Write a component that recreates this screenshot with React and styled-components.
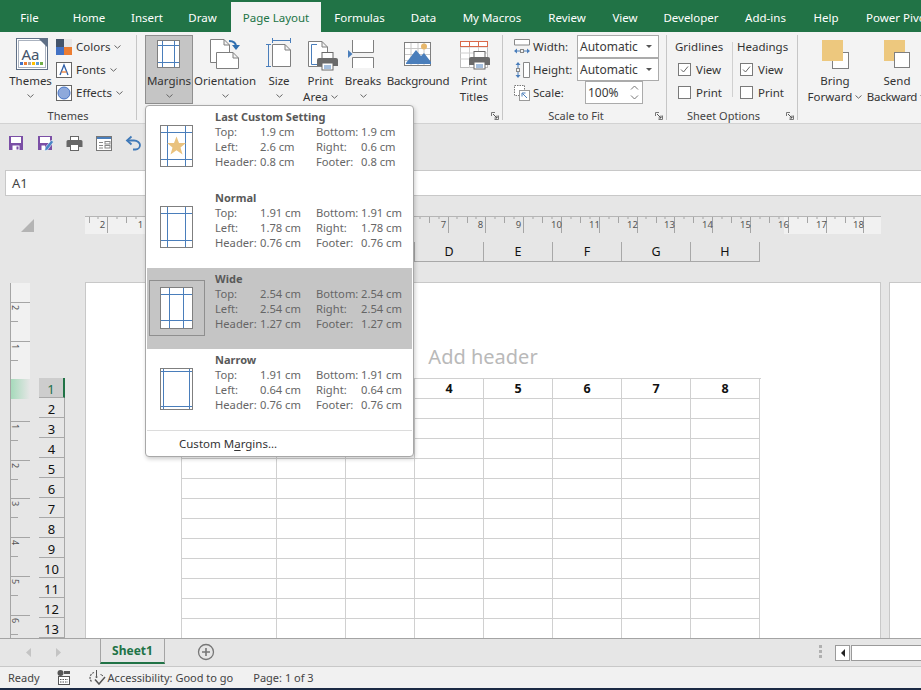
import React from "react";
import styled, { createGlobalStyle } from "styled-components";

const UI_FONT = '"Noto Sans", "Open Sans", "Liberation Sans", sans-serif';

const Global = createGlobalStyle`
  html, body { margin: 0; padding: 0; background: #e6e6e6; }
  * { box-sizing: border-box; }
`;

const Window = styled.div`
  position: relative;
  width: 921px;
  height: 690px;
  overflow: hidden;
  display: flex;
  flex-direction: column;
  background: #e6e6e6;
  font-family: ${UI_FONT};
  font-size: 11.5px;
  color: #333;
`;

/* ---------- tabs ---------- */
const TabBar = styled.div`
  height: 32px;
  flex: none;
  display: flex;
  background: #217346;
`;
const Tab = styled.div`
  flex: none;
  width: ${(p) => p.$width}px;
  margin-top: ${(p) => (p.$active ? 2 : 0)}px;
  margin-left: ${(p) => (p.$active ? 1 : 0)}px;
  padding-top: ${(p) => (p.$active ? 0 : 2)}px;
  display: flex;
  align-items: center;
  justify-content: center;
  white-space: nowrap;
  font-size: 11.5px;
  background: ${(p) => (p.$active ? "#f3f3f3" : "transparent")};
  color: ${(p) => (p.$active ? "#217346" : "#fff")};
`;

/* ---------- ribbon ---------- */
const Ribbon = styled.div`
  height: 92px;
  flex: none;
  display: flex;
  padding-top: 3px;
  background: #f3f3f3;
  border-bottom: 1px solid #d2d2d2;
`;
const Group = styled.div`
  flex: none;
  width: ${(p) => p.$width}px;
  height: 85px;
  margin-left: ${(p) => p.$left || 0}px;
  display: flex;
  flex-direction: column;
  border-right: ${(p) => (p.$plain ? "none" : "1px solid #c6c6c6")};
`;
const GroupBody = styled.div`
  height: 72px;
  flex: none;
  display: flex;
  padding-left: ${(p) => p.$pad || 0}px;
`;
const GroupFooter = styled.div`
  height: 13px;
  display: flex;
  line-height: 18px;
  color: #444;
  font-size: 11px;
`;
const GroupLabel = styled.div`
  flex: 1;
  text-align: center;
  white-space: nowrap;
`;
const Launcher = styled.svg`
  flex: none;
  width: 8px;
  height: 8px;
  margin: 5px 3px 0 6px;
`;
const BigButton = styled.div`
  flex: none;
  width: ${(p) => p.$width}px;
  height: 69px;
  display: flex;
  flex-direction: column;
  align-items: center;
  border: 1px solid ${(p) => (p.$active ? "#8f8f8f" : "transparent")};
  background: ${(p) => (p.$active ? "#c5c5c5" : "transparent")};
  line-height: 16px;
  color: #333;
  white-space: nowrap;
`;
const BigSvg = styled.svg`
  flex: none;
  width: 40px;
  height: 37px;
`;
const ButtonLine = styled.div`
  height: 16px;
  display: flex;
  align-items: center;
  gap: 3px;
  letter-spacing: ${(p) => (p.$tight ? "-0.3px" : "normal")};
`;
const Chevron = styled.svg`
  width: 7px;
  height: 4px;
  flex: none;
`;
const SmallColumn = styled.div`
  display: flex;
  flex-direction: column;
  margin-left: 5px;
`;
const SmallRow = styled.div`
  height: 23px;
  display: flex;
  align-items: center;
  gap: 4px;
  white-space: nowrap;
`;
const SmallIcon = styled.svg`
  flex: none;
  width: 16px;
  height: 16px;
`;
const ScaleColumn = styled.div`
  display: flex;
  flex-direction: column;
`;
const ScaleRow = styled.div`
  height: 23px;
  display: flex;
  align-items: center;
  gap: 3px;
`;
const ScaleLabel = styled.div`
  width: ${(p) => p.$width}px;
  flex: none;
`;
const Select = styled.div`
  width: 82px;
  height: 23px;
  flex: none;
  display: flex;
  align-items: center;
  justify-content: space-between;
  padding: 0 6px 0 2px;
  background: #fff;
  border: 1px solid #ababab;
  font-size: 12px;
  color: #3a3a3a;
`;
const Caret = styled.div`
  width: 0;
  height: 0;
  border-left: 3.5px solid transparent;
  border-right: 3.5px solid transparent;
  border-top: 3.5px solid #555;
`;
const Spinner = styled(Select)`
  width: 58px;
  padding-right: 3px;
`;
const SpinArrows = styled.svg`
  width: 9px;
  height: 17px;
  flex: none;
`;
const OptionColumn = styled.div`
  width: ${(p) => p.$width}px;
  flex: none;
  display: flex;
  flex-direction: column;
`;
const OptionTitle = styled.div`
  height: 23px;
  display: flex;
  align-items: center;
`;
const OptionRow = styled.label`
  height: 23px;
  display: flex;
  align-items: center;
  gap: 5px;
  padding-left: 3px;
`;
const CheckBox = styled.span`
  width: 13px;
  height: 13px;
  flex: none;
  display: flex;
  background: #fff;
  border: 1px solid #7a7a7a;
`;
const OptionDivider = styled.div`
  width: 1px;
  height: 55px;
  flex: none;
  margin: 7px 4px 0 0;
  background: #d0d0d0;
`;

/* ---------- quick access and formula bar ---------- */
const QuickAccess = styled.div`
  height: 46px;
  flex: none;
  display: flex;
  align-items: center;
  gap: 12px;
  padding: 0 0 8px 8px;
`;
const QuickIcon = styled.svg`
  width: 17px;
  height: 17px;
  flex: none;
`;
const FormulaBar = styled.div`
  height: 26px;
  flex: none;
  margin-left: 5px;
  display: flex;
  align-items: center;
  padding-left: 6px;
  background: #fff;
  border: 1px solid #c8c8c8;
  border-right: none;
  font-size: 13px;
  color: #444;
`;

/* ---------- workspace ---------- */
const Workspace = styled.div`
  flex: 1;
  min-height: 0;
  display: flex;
  overflow: hidden;
`;
const Gutter = styled.div`
  width: 85px;
  flex: none;
  display: flex;
  flex-direction: column;
`;
const Corner = styled.div`
  width: 13px;
  height: 13px;
  flex: none;
  margin: 23px 0 51px 21px;
  background: #b4b4b4;
  clip-path: polygon(100% 0, 100% 100%, 0 100%);
`;
const GutterRows = styled.div`
  flex: 1;
  display: flex;
`;
const VRuler = styled.svg`
  width: 21px;
  height: 355px;
  flex: none;
  margin-left: 10px;
`;
const RowHeaders = styled.div`
  width: 26px;
  flex: none;
  margin-left: 8px;
  padding-top: 95px;
  display: flex;
  flex-direction: column;
`;
const RowHeader = styled.div`
  height: 20px;
  flex: none;
  display: flex;
  align-items: center;
  justify-content: center;
  padding-top: 2px;
  font-size: 13px;
  color: ${(p) => (p.$active ? "#1f6f4a" : "#111")};
  background: ${(p) => (p.$active ? "#cdcdcd" : "transparent")};
  border-bottom: 1px solid #a8a8a8;
  border-right: ${(p) => (p.$active ? "2px solid #217346" : "1px solid #a8a8a8")};
`;
const MainColumn = styled.div`
  flex: 1;
  min-width: 0;
  display: flex;
  flex-direction: column;
`;
const HRuler = styled.svg`
  width: 796px;
  height: 18px;
  flex: none;
  margin-top: 20px;
`;
const ColumnHeaders = styled.div`
  display: flex;
  flex: none;
  height: 20px;
  margin: 8px 0 20px 97px;
`;
const ColumnHeader = styled.div`
  width: ${(p) => p.$width}px;
  flex: none;
  display: flex;
  align-items: center;
  justify-content: center;
  font-size: 12.5px;
  color: #111;
  border-right: 1px solid #a8a8a8;
  border-bottom: 1px solid #a8a8a8;
`;
const PageRow = styled.div`
  flex: 1;
  min-height: 0;
  display: flex;
  gap: 8px;
`;
const Page = styled.div`
  width: 796px;
  flex: none;
  background: #fff;
  border: 1px solid #c8c8c8;
  border-bottom: none;
  overflow: hidden;
`;
const NextPage = styled(Page)`
  width: 60px;
`;
const HeaderZone = styled.div`
  height: 95px;
  display: flex;
  align-items: flex-end;
  justify-content: center;
  padding-bottom: 7px;
  font-size: 20px;
  line-height: 28px;
  color: #b9b9b9;
`;
const SheetGrid = styled.div`
  display: grid;
  grid-template-columns: 96px repeat(7, 69px);
  grid-auto-rows: 20px;
  margin-left: 95px;
  border-top: 1px solid #d0d0d0;
  width: 580px;
`;
const Cell = styled.div`
  display: flex;
  align-items: center;
  justify-content: center;
  font-size: 12.5px;
  font-weight: 700;
  color: #111;
  border-right: 1px solid #d0d0d0;
  border-bottom: 1px solid #d0d0d0;
  border-left: ${(p) => (p.$first ? "1px solid #d0d0d0" : "none")};
`;

/* ---------- sheet tabs and status ---------- */
const SheetBar = styled.div`
  height: 29px;
  flex: none;
  display: flex;
  background: #e6e6e6;
  border-top: 1px solid #a4a4a4;
  border-bottom: 1px solid #c8c8c8;
`;
const NavArrows = styled.svg`
  width: 100px;
  height: 27px;
  flex: none;
`;
const SheetTab = styled.div`
  width: 65px;
  height: 25px;
  flex: none;
  display: flex;
  align-items: center;
  justify-content: center;
  font-weight: 700;
  font-size: 12px;
  color: #217346;
  border-left: 1px solid #a4a4a4;
  border-right: 1px solid #a4a4a4;
  border-bottom: 2px solid #217346;
`;
const AddSheet = styled.svg`
  width: 18px;
  height: 18px;
  flex: none;
  margin: 4px 0 0 32px;
`;
const SplitDots = styled.svg`
  width: 4px;
  height: 14px;
  flex: none;
  margin: 6px 0 0 604px;
`;
const ScrollButton = styled.div`
  width: 15px;
  height: 16px;
  flex: none;
  margin: 6px 0 0 12px;
  display: flex;
  align-items: center;
  justify-content: center;
  background: #fff;
  border: 1px solid #9a9a9a;
`;
const ScrollArrow = styled.div`
  width: 0;
  height: 0;
  border-top: 4px solid transparent;
  border-bottom: 4px solid transparent;
  border-right: 4px solid #222;
`;
const ScrollTrack = styled.div`
  width: 90px;
  height: 16px;
  flex: none;
  margin: 6px 0 0 1px;
  background: #fff;
  border: 1px solid #9a9a9a;
`;
const StatusBar = styled.div`
  height: 21px;
  flex: none;
  display: flex;
  align-items: center;
  padding-left: 8px;
  background: #f1f1f1;
  font-size: 11px;
  color: #444;
`;
const StatusIcon = styled.svg`
  flex: none;
  width: ${(p) => p.$size}px;
  height: 15px;
  margin-left: ${(p) => p.$left}px;
`;
const StatusText = styled.span`
  margin-left: ${(p) => p.$left || 0}px;
  white-space: nowrap;
`;
const BottomEdge = styled.div`
  height: 2px;
  flex: none;
  background: #1b2a44;
`;

/* ---------- margins menu ---------- */
const MarginsMenu = styled.div`
  position: absolute;
  left: 145px;
  top: 105px;
  width: 269px;
  height: 352px;
  padding: 0 1px 1px;
  background: #fff;
  border: 1px solid #a8a8a8;
  border-radius: 4px;
  box-shadow: 1px 2px 4px rgba(0, 0, 0, 0.2);
  z-index: 5;
`;
const MarginRow = styled.div`
  height: 81px;
  display: flex;
  padding-left: 2px;
  background: ${(p) => (p.$active ? "#c5c5c5" : "transparent")};
`;
const MarginIconBox = styled.div`
  width: 56px;
  height: 56px;
  flex: none;
  margin-top: 12px;
  padding: 6px 0 0 10px;
  border: 1px solid ${(p) => (p.$active ? "#8f8f8f" : "transparent")};
`;
const MarginIcon = styled.svg`
  display: block;
  width: 33px;
  height: 42px;
`;
const MarginText = styled.div`
  margin-left: 10px;
  padding-top: 3px;
`;
const MarginTitle = styled.div`
  height: 15px;
  line-height: 15px;
  font-weight: 700;
  font-size: 11px;
  color: #595959;
  white-space: nowrap;
`;
const MarginGrid = styled.div`
  display: grid;
  grid-template-columns: 45px 56px 45px auto;
  grid-auto-rows: 15px;
  line-height: 15px;
  font-size: 11.2px;
  color: #666;
  white-space: nowrap;
`;
const MenuSeparator = styled.div`
  height: 1px;
  background: #dcdcdc;
`;
const MenuCommand = styled.div`
  height: 24px;
  display: flex;
  align-items: center;
  padding-left: 32px;
  font-size: 11.5px;
  color: #333;
  u { text-underline-offset: 2px; }
`;

/* ---------- drawings ---------- */
const GREY = "#7f7f7f";
const BLUE = "#4a7ebb";

const Chev = () => (
  <Chevron viewBox="0 0 7 4">
    <path d="M0.5 0.5 L3.5 3.2 L6.5 0.5" fill="none" stroke="#666" />
  </Chevron>
);

const Big = ({ cx, children }) => (
  <BigSvg viewBox={`${cx - 20} 36 40 37`}>{children}</BigSvg>
);

const Printer = ({ x, y }) => (
  <g transform={`translate(${x} ${y})`}>
    <rect x="5" y="0.5" width="11" height="7" fill="#fff" stroke="#6b6b6b" />
    <path d="M2 6 H19 a2 2 0 0 1 2 2 V14 H0 V8 a2 2 0 0 1 2-2Z" fill="#6b6b6b" />
    <rect x="5" y="11" width="11" height="7" fill="#fff" stroke="#6b6b6b" />
    <path d="M7 14 H14 M7 16 H14" stroke={BLUE} />
  </g>
);

const FoldPage = ({ x, y, w, h, f = 6 }) => (
  <path
    d={`M${x + 0.5} ${y + 0.5} H${x + w - f} L${x + w - 0.5} ${y + f} V${y + h - 0.5} H${x + 0.5}Z M${x + w - f} ${y + 0.5} V${y + f} H${x + w - 0.5}`}
    fill="#fff"
    stroke={GREY}
  />
);

const ThemesIcon = () => (
  <Big cx={30}>
    <rect x="15.5" y="38.5" width="31" height="31" fill="#fff" stroke="#5f6f86" />
    <rect x="17.5" y="40.5" width="27" height="27" fill="#fff" stroke="#aab2bf" />
    <path d="M38 39 H46 V47Z" fill="#5f6f86" />
    <text x="20.5" y="60" fontFamily={UI_FONT} fontSize="15" fill="#44546a">Aa</text>
    {["#4472c4", "#ed7d31", "#a5a5a5", "#ffc000", "#5b9bd5", "#70ad47"].map((c, i) => (
      <rect key={c} x={19 + i * 4} y="62" width="3" height="3" fill={c} />
    ))}
  </Big>
);
const MarginsIcon = () => (
  <Big cx={169}>
    <rect x="157.5" y="40.5" width="22" height="27" fill="#fff" stroke={GREY} />
    <path d="M162.5 41 V67 M174.5 41 V67 M158 45.5 H179 M158 62.5 H179" stroke={BLUE} fill="none" />
  </Big>
);
const OrientationIcon = () => (
  <Big cx={225}>
    <FoldPage x={210} y={39} w={20} h={24} />
    <FoldPage x={216} y={52} w={23} h={17} />
    <path d="M229 41 C234 41 236 43 236 47" fill="none" stroke="#2f6fb0" strokeWidth="2" />
    <path d="M232 45 L236 50 L240 45Z" fill="#2f6fb0" />
  </Big>
);
const SizeIcon = () => (
  <Big cx={279}>
    <FoldPage x={272} y={44} w={19} h={23} />
    <path d="M272 40.5 H291 M272.5 38 V43 M290.5 38 V43 M268.5 44 V67 M266 44.5 H271 M266 66.5 H271" stroke={BLUE} fill="none" />
  </Big>
);
const PrintAreaIcon = () => (
  <Big cx={320}>
    <FoldPage x={307} y={41} w={20} h={26} />
    <path d="M316 44.5 H310.5 V64.5 H316" stroke={BLUE} fill="none" />
    <Printer x={316} y={52} />
  </Big>
);
const BreaksIcon = () => (
  <Big cx={363}>
    <path d="M352.5 40 V52.5 H373.5 V40 M352.5 68 V57.5 H373.5 V68" fill="#fff" stroke={GREY} />
    <path d="M348 50 L352.5 54 L348 58Z" fill={BLUE} />
  </Big>
);
const BackgroundIcon = () => (
  <Big cx={418}>
    <rect x="404.5" y="42.5" width="26" height="23" fill="#fff" stroke={GREY} />
    <path d="M411 43 V65 M418 43 V65 M424 43 V65 M405 48.5 H430 M405 54.5 H430 M405 60.5 H430" stroke="#c8c8c8" />
    <circle cx="424" cy="46.5" r="3" fill="#e7b76a" />
    <path d="M406 63 L416 50 L421 56 L424 53 L431 62 V64 H406Z" fill={BLUE} />
  </Big>
);
const PrintTitlesIcon = () => (
  <Big cx={474}>
    <rect x="460.5" y="41.5" width="27" height="26" fill="#fff" stroke="#bdbdbd" />
    <path d="M460 47 H488 M460 53 H488 M460 59 H488 M469.5 47 V68 M478.5 47 V68" stroke="#cfcfcf" />
    <rect x="460.5" y="41.5" width="27" height="5" fill="#fff" stroke="#d9694a" />
    <path d="M469.5 41 V47 M478.5 41 V47" stroke="#d9694a" />
    <Printer x={469} y={51} />
  </Big>
);
const ForwardIcon = () => (
  <Big cx={835}>
    <rect x="832.5" y="52.5" width="16" height="16" fill="#fff" stroke={GREY} />
    <rect x="822" y="40" width="21" height="21" fill="#edc87e" />
  </Big>
);
const BackwardIcon = () => (
  <Big cx={898}>
    <rect x="885" y="40" width="21" height="21" fill="#edc87e" />
    <rect x="895.5" y="52.5" width="15" height="15" fill="#fff" stroke={GREY} />
  </Big>
);

const LauncherIcon = () => (
  <Launcher viewBox="0 0 8 8">
    <path d="M0.5 4 V0.5 H4 M7.5 3.5 V7.5 H3.5" fill="none" stroke="#777" />
    <path d="M2 2 L6 6 M6 3.5 V6 H3.5" fill="none" stroke="#555" />
  </Launcher>
);

const StarMark = () => (
  <path d="M16.5 11.5 L19 18 L26 18 L20.5 22.5 L22.5 29.5 L16.5 25.3 L10.5 29.5 L12.5 22.5 L7 18 L14 18Z" fill="#e9c27e" />
);

const MarginGlyph = ({ vx, hy, star }) => (
  <MarginIcon viewBox="0 0 33 42">
    <rect x="0.5" y="0.5" width="32" height="41" fill="#fff" />
    {vx.map((x) => (
      <path key={`v${x}`} d={`M${x} 1 V41`} stroke={BLUE} />
    ))}
    {hy.map((y) => (
      <path key={`h${y}`} d={`M1 ${y} H32`} stroke={BLUE} />
    ))}
    <rect x="0.5" y="0.5" width="32" height="41" fill="none" stroke={GREY} />
    {star && <StarMark />}
  </MarginIcon>
);

/* ---------- data ---------- */
const TABS = [
  ["File", 59], ["Home", 60], ["Insert", 56], ["Draw", 55], ["Page Layout", 90, true],
  ["Formulas", 77], ["Data", 51], ["My Macros", 86], ["Review", 64], ["View", 52],
  ["Developer", 80], ["Add-ins", 69], ["Help", 52], ["Power Pivot", 92],
];

const MARGINS = [
  { title: "Last Custom Setting", vals: ["1.9 cm", "1.9 cm", "2.6 cm", "0.6 cm", "0.8 cm", "0.8 cm"], vx: [7.5, 25.5], hy: [7.5, 34.5], star: true },
  { title: "Normal", vals: ["1.91 cm", "1.91 cm", "1.78 cm", "1.78 cm", "0.76 cm", "0.76 cm"], vx: [7.5, 25.5], hy: [7.5, 34.5] },
  { title: "Wide", vals: ["2.54 cm", "2.54 cm", "2.54 cm", "2.54 cm", "1.27 cm", "1.27 cm"], vx: [9.5, 23.5], hy: [7.5, 33.5], active: true },
  { title: "Narrow", vals: ["1.91 cm", "1.91 cm", "0.64 cm", "0.64 cm", "0.76 cm", "0.76 cm"], vx: [3.5, 29.5], hy: [3.5, 38.5] },
];
const LABELS = [["Top:", "Bottom:"], ["Left:", "Right:"], ["Header:", "Footer:"]];

const CM = 37.8;
const ORIGIN = 98;
const rulerUnits = Array.from({ length: 21 }, (_, i) => i - 2);

const HorizontalRuler = () => (
  <HRuler viewBox="0 0 796 18">
    <rect x="0" y="0" width="98" height="18" fill="#f1f1f1" />
    <rect x="699" y="0" width="97" height="18" fill="#f1f1f1" />
    <path d="M0 0.5 H796" stroke="#b5b5b5" />
    {rulerUnits.map((n) => {
      const x = Math.round(ORIGIN + n * CM) + 0.5;
      const mid = Math.round(ORIGIN + (n - 0.5) * CM) + 0.5;
      return (
        <g key={n}>
          {n !== 0 && <path d={`M${x} 1 V17`} stroke="#a5a5a5" />}
          <path d={`M${mid} 1 V7`} stroke="#a5a5a5" />
          <path d={`M${x - 9.5} 1 V3 M${x - 28.5} 1 V3`} stroke="#a5a5a5" />
          {n !== 0 && (
            <text x={x - 5} y="12" textAnchor="middle" fontFamily={UI_FONT} fontSize="9.5" fill="#555">
              {Math.abs(n)}
            </text>
          )}
        </g>
      );
    })}
  </HRuler>
);

const V_TICKS = [
  [19, 2], [58, 1], [138, 1], [177, 2], [215, 3], [254, 4], [293, 5], [332, 6],
];

const VerticalRuler = () => (
  <VRuler viewBox="0 0 21 355">
    <defs>
      <linearGradient id="rowMark" x1="0" x2="1" y1="0" y2="0">
        <stop offset="0" stopColor="#a6dabb" />
        <stop offset="1" stopColor="#e6e6e6" />
      </linearGradient>
    </defs>
    <rect x="1" y="0" width="19" height="96" fill="#f1f1f1" />
    <rect x="1" y="96" width="19" height="20" fill="url(#rowMark)" />
    <path d="M0.5 0 V355" stroke="#a5a5a5" />
    {V_TICKS.map(([y, n]) => (
      <g key={y}>
        <path d={`M1 ${y + 0.5} H20`} stroke="#a5a5a5" />
        <path d={`M1 ${y + 19.5} H8`} stroke="#a5a5a5" />
        <text
          transform={`translate(2 ${y + 5.5}) rotate(90)`}
          textAnchor="middle"
          fontFamily={UI_FONT}
          fontSize="9"
          fill="#555"
        >
          {n}
        </text>
      </g>
    ))}
  </VRuler>
);

const GRID_ROWS = 13;
const GRID_COLS = 8;

export default function App() {
  return (
    <Window>
      <Global />
      <TabBar>
        {TABS.map(([t, w, a]) => (
          <Tab key={t} $width={w} $active={a}>{t}</Tab>
        ))}
      </TabBar>

      <Ribbon>
        <Group $width={137}>
          <GroupBody $pad={10}>
            <BigButton $width={41}>
              <ThemesIcon />
              <ButtonLine>Themes</ButtonLine>
              <ButtonLine><Chev /></ButtonLine>
            </BigButton>
            <SmallColumn>
              <SmallRow>
                <SmallIcon viewBox="0 0 16 16">
                  <rect width="8" height="8" fill="#44546a" />
                  <rect x="8" width="8" height="8" fill="#e7e6e6" />
                  <rect y="8" width="8" height="8" fill="#4472c4" />
                  <rect x="8" y="8" width="8" height="8" fill="#ed7d31" />
                </SmallIcon>
                Colors <Chev />
              </SmallRow>
              <SmallRow>
                <SmallIcon viewBox="0 0 16 16">
                  <rect x="0.5" y="0.5" width="15" height="15" fill="#fff" stroke="#666" />
                  <path d="M4 13 L8 3 L12 13" fill="none" stroke="#2f5fa8" strokeWidth="1.3" />
                  <path d="M5.5 10 H10.5" stroke="#ed7d31" strokeWidth="1.3" />
                </SmallIcon>
                Fonts <Chev />
              </SmallRow>
              <SmallRow>
                <SmallIcon viewBox="0 0 16 16">
                  <rect x="0.5" y="0.5" width="15" height="15" fill="#fff" stroke="#666" />
                  <circle cx="8" cy="8" r="6" fill="#8ea9db" stroke="#4472c4" />
                </SmallIcon>
                Effects <Chev />
              </SmallRow>
            </SmallColumn>
          </GroupBody>
          <GroupFooter><GroupLabel>Themes</GroupLabel></GroupFooter>
        </Group>

        <Group $width={358} $left={8}>
          <GroupBody>
            <BigButton $width={48} $active>
              <MarginsIcon />
              <ButtonLine>Margins</ButtonLine>
              <ButtonLine><Chev /></ButtonLine>
            </BigButton>
            <BigButton $width={64}>
              <OrientationIcon />
              <ButtonLine>Orientation</ButtonLine>
              <ButtonLine><Chev /></ButtonLine>
            </BigButton>
            <BigButton $width={44}>
              <SizeIcon />
              <ButtonLine>Size</ButtonLine>
              <ButtonLine><Chev /></ButtonLine>
            </BigButton>
            <BigButton $width={39}>
              <PrintAreaIcon />
              <ButtonLine>Print</ButtonLine>
              <ButtonLine>Area <Chev /></ButtonLine>
            </BigButton>
            <BigButton $width={46}>
              <BreaksIcon />
              <ButtonLine>Breaks</ButtonLine>
              <ButtonLine><Chev /></ButtonLine>
            </BigButton>
            <BigButton $width={64}>
              <BackgroundIcon />
              <ButtonLine $tight>Background</ButtonLine>
            </BigButton>
            <BigButton $width={48}>
              <PrintTitlesIcon />
              <ButtonLine>Print</ButtonLine>
              <ButtonLine>Titles</ButtonLine>
            </BigButton>
          </GroupBody>
          <GroupFooter>
            <GroupLabel>Page Setup</GroupLabel>
            <LauncherIcon />
          </GroupFooter>
        </Group>

        <Group $width={164}>
          <GroupBody $pad={11}>
            <ScaleColumn>
              <ScaleRow>
                <SmallIcon viewBox="0 0 16 16">
                  <path d="M0.5 6 V0.5 H15.5 V6 H0.5" fill="#fff" stroke="#888" />
                  <path d="M1 12 H6 M10 12 H15" stroke={BLUE} />
                  <path d="M0 12 L3 9.5 V14.5Z M16 12 L13 9.5 V14.5Z" fill={BLUE} />
                  <rect x="6.5" y="10.5" width="3" height="3" fill="none" stroke="#888" />
                </SmallIcon>
                <ScaleLabel $width={41}>Width:</ScaleLabel>
                <Select>Automatic<Caret /></Select>
              </ScaleRow>
              <ScaleRow>
                <SmallIcon viewBox="0 0 16 16">
                  <path d="M9.5 0.5 H15.5 V15.5 H9.5Z" fill="#fff" stroke="#888" />
                  <path d="M4 1 V6 M4 10 V15" stroke={BLUE} />
                  <path d="M4 0 L1.5 3 H6.5Z M4 16 L1.5 13 H6.5Z" fill={BLUE} />
                  <rect x="2.5" y="6.5" width="3" height="3" fill="none" stroke="#888" />
                </SmallIcon>
                <ScaleLabel $width={41}>Height:</ScaleLabel>
                <Select>Automatic<Caret /></Select>
              </ScaleRow>
              <ScaleRow>
                <SmallIcon viewBox="0 0 16 16">
                  <rect x="0.5" y="0.5" width="10" height="10" fill="#fff" stroke="#777" strokeDasharray="1.5 1" />
                  <rect x="5.5" y="5.5" width="10" height="10" fill="#fff" stroke="#999" />
                  <path d="M13 13 L8.5 8.5 M8 11.5 V8 H11.5" fill="none" stroke={BLUE} />
                </SmallIcon>
                <ScaleLabel $width={49}>Scale:</ScaleLabel>
                <Spinner>
                  100%
                  <SpinArrows viewBox="0 0 9 17">
                    <path d="M1 5.5 L4.5 2 L8 5.5 M1 11.5 L4.5 15 L8 11.5" fill="none" stroke="#777" />
                  </SpinArrows>
                </Spinner>
              </ScaleRow>
            </ScaleColumn>
          </GroupBody>
          <GroupFooter>
            <GroupLabel>Scale to Fit</GroupLabel>
            <LauncherIcon />
          </GroupFooter>
        </Group>

        <Group $width={131}>
          <GroupBody $pad={8}>
            <OptionColumn $width={57}>
              <OptionTitle>Gridlines</OptionTitle>
              <OptionRow>
                <CheckBox>
                  <svg viewBox="0 0 11 11" width="11" height="11">
                    <path d="M2 5.5 L4.5 8 L9 2.5" fill="none" stroke="#666" />
                  </svg>
                </CheckBox>
                View
              </OptionRow>
              <OptionRow><CheckBox />Print</OptionRow>
            </OptionColumn>
            <OptionDivider />
            <OptionColumn $width={60}>
              <OptionTitle>Headings</OptionTitle>
              <OptionRow>
                <CheckBox>
                  <svg viewBox="0 0 11 11" width="11" height="11">
                    <path d="M2 5.5 L4.5 8 L9 2.5" fill="none" stroke="#666" />
                  </svg>
                </CheckBox>
                View
              </OptionRow>
              <OptionRow><CheckBox />Print</OptionRow>
            </OptionColumn>
          </GroupBody>
          <GroupFooter>
            <GroupLabel>Sheet Options</GroupLabel>
            <LauncherIcon />
          </GroupFooter>
        </Group>

        <Group $width={123} $plain>
          <GroupBody $pad={7}>
            <BigButton $width={60}>
              <ForwardIcon />
              <ButtonLine>Bring</ButtonLine>
              <ButtonLine>Forward <Chev /></ButtonLine>
            </BigButton>
            <BigButton $width={64}>
              <BackwardIcon />
              <ButtonLine>Send</ButtonLine>
              <ButtonLine $tight>Backward <Chev /></ButtonLine>
            </BigButton>
          </GroupBody>
        </Group>
      </Ribbon>

      <QuickAccess>
        <QuickIcon viewBox="0 0 17 17">
          <path d="M1 1 H15 V15 H1Z" fill="#7b4fa6" />
          <rect x="3" y="2" width="10" height="6" fill="#fff" />
          <rect x="4.5" y="10.5" width="7" height="4.5" fill="#fff" />
          <rect x="8.5" y="11.5" width="2" height="3" fill="#7b4fa6" />
        </QuickIcon>
        <QuickIcon viewBox="0 0 17 17">
          <path d="M1 1 H15 V15 H1Z" fill="#7b4fa6" />
          <rect x="3" y="2" width="10" height="6" fill="#fff" />
          <rect x="4.5" y="10.5" width="3.5" height="4.5" fill="#fff" />
          <path d="M7.5 16 L8.5 12 L14.5 5 L16.5 7 L10.5 15Z" fill="#4a86c5" stroke="#fff" strokeWidth="0.6" />
        </QuickIcon>
        <QuickIcon viewBox="0 0 17 17">
          <rect x="4.5" y="1.5" width="8" height="4" fill="#fff" stroke="#666" />
          <path d="M2 5 H15 a1.5 1.5 0 0 1 1.5 1.5 V12 H0.5 V6.5 A1.5 1.5 0 0 1 2 5Z" fill="#666" />
          <rect x="4.5" y="9.5" width="8" height="6" fill="#fff" stroke="#666" />
        </QuickIcon>
        <QuickIcon viewBox="0 0 17 17">
          <rect x="1.5" y="1.5" width="15" height="14" fill="#fff" stroke="#777" />
          <rect x="2" y="2" width="14" height="2" fill="#4a7ebb" />
          <path d="M4 7.5 H8 M4 10.5 H8 M4 13 H8" stroke="#888" />
          <rect x="10" y="6.5" width="5" height="2.5" fill="none" stroke="#888" />
          <rect x="10" y="10.5" width="5" height="2.5" fill="none" stroke="#888" />
        </QuickIcon>
        <QuickIcon viewBox="0 0 17 17">
          <path d="M4 5.5 H10 C13.5 5.5 16 8 16 10 C16 12.5 14 14.5 11.5 14.5 H9" fill="none" stroke="#3f79b8" strokeWidth="1.8" />
          <path d="M7.5 1.5 L3 5.5 L7.5 9.5" fill="none" stroke="#3f79b8" strokeWidth="1.8" />
        </QuickIcon>
      </QuickAccess>

      <FormulaBar>A1</FormulaBar>

      <Workspace>
        <Gutter>
          <Corner />
          <GutterRows>
            <VerticalRuler />
            <RowHeaders>
              {Array.from({ length: GRID_ROWS }, (_, i) => (
                <RowHeader key={i} $active={i === 0}>{i + 1}</RowHeader>
              ))}
            </RowHeaders>
          </GutterRows>
        </Gutter>
        <MainColumn>
          <HorizontalRuler />
          <ColumnHeaders>
            {["A", "B", "C", "D", "E", "F", "G", "H"].map((c, i) => (
              <ColumnHeader key={c} $width={i === 0 ? 95 : 69}>{c}</ColumnHeader>
            ))}
          </ColumnHeaders>
          <PageRow>
            <Page>
              <HeaderZone>Add header</HeaderZone>
              <SheetGrid>
                {Array.from({ length: GRID_ROWS * GRID_COLS }, (_, i) => (
                  <Cell key={i} $first={i % GRID_COLS === 0}>
                    {i < GRID_COLS ? i + 1 : ""}
                  </Cell>
                ))}
              </SheetGrid>
            </Page>
            <NextPage />
          </PageRow>
        </MainColumn>
      </Workspace>

      <SheetBar>
        <NavArrows viewBox="0 0 100 27">
          <path d="M31 9 L26 13.5 L31 18Z M56 9 L61 13.5 L56 18Z" fill="#c4c4c4" />
        </NavArrows>
        <SheetTab>Sheet1</SheetTab>
        <AddSheet viewBox="0 0 18 18">
          <circle cx="9" cy="9" r="7.5" fill="none" stroke="#777" strokeWidth="1.3" />
          <path d="M9 5 V13 M5 9 H13" stroke="#777" strokeWidth="1.6" />
        </AddSheet>
        <SplitDots viewBox="0 0 4 14">
          <path d="M0 0 H3 V3 H0Z M0 5 H3 V8 H0Z M0 10 H3 V13 H0Z" fill="#b0b0b0" />
        </SplitDots>
        <ScrollButton><ScrollArrow /></ScrollButton>
        <ScrollTrack />
      </SheetBar>

      <StatusBar>
        <StatusText>Ready</StatusText>
        <StatusIcon $size={14} $left={17} viewBox="0 0 14 15">
          <circle cx="3.5" cy="3" r="3" fill="#555" />
          <rect x="7" y="1" width="6" height="3" fill="#555" />
          <rect x="1.5" y="6.5" width="11" height="8" fill="#fff" stroke="#555" />
          <path d="M3 9.5 H11 M3 12 H11" stroke="#555" strokeDasharray="1.5 1" />
        </StatusIcon>
        <StatusIcon $size={17} $left={18} viewBox="0 0 17 15">
          <path d="M5 2.5 A5.5 5.5 0 0 0 3 12" fill="none" stroke="#555" strokeWidth="1.2" strokeDasharray="2 1" />
          <path d="M7.5 0 V6" stroke="#555" />
          <path d="M11.5 4.5 A5 5 0 0 1 14 6" fill="none" stroke="#555" />
          <circle cx="7.5" cy="7" r="1" fill="#555" />
          <path d="M6 9.5 L10 14 L16 7" fill="none" stroke="#555" strokeWidth="1.5" />
        </StatusIcon>
        <StatusText $left={2}>Accessibility: Good to go</StatusText>
        <StatusText $left={20}>Page: 1 of 3</StatusText>
      </StatusBar>
      <BottomEdge />

      <MarginsMenu>
        {MARGINS.map((m) => (
          <MarginRow key={m.title} $active={m.active}>
            <MarginIconBox $active={m.active}>
              <MarginGlyph vx={m.vx} hy={m.hy} star={m.star} />
            </MarginIconBox>
            <MarginText>
              <MarginTitle>{m.title}</MarginTitle>
              <MarginGrid>
                {LABELS.map(([a, b], i) => (
                  <React.Fragment key={a}>
                    <span>{a}</span>
                    <span>{m.vals[i * 2]}</span>
                    <span>{b}</span>
                    <span>{m.vals[i * 2 + 1]}</span>
                  </React.Fragment>
                ))}
              </MarginGrid>
            </MarginText>
          </MarginRow>
        ))}
        <MenuSeparator />
        <MenuCommand>Custom M<u>a</u>rgins...</MenuCommand>
      </MarginsMenu>
    </Window>
  );
}
